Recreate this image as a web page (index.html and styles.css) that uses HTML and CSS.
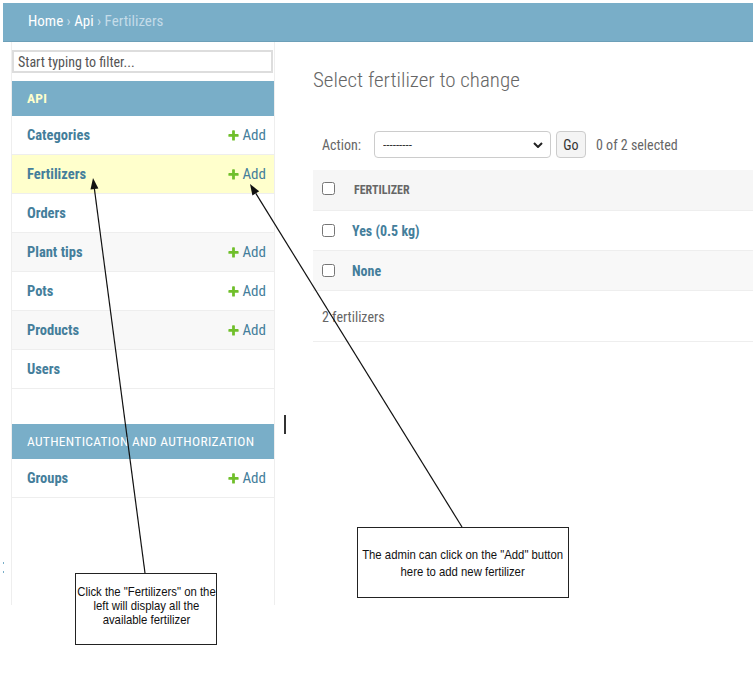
FILE: index.html
```html
<!DOCTYPE html>
<html lang="en">
<head>
<meta charset="utf-8">
<title>Select fertilizer to change</title>
<link rel="stylesheet" href="styles.css">
</head>
<body>
<div class="page">
  <div class="breadcrumbs"><a href="#">Home</a> › <a href="#">Api</a> › Fertilizers</div>
  <div class="main">
    <nav class="sidebar">
      <input class="filter" type="search" placeholder="Start typing to filter...">
      <div class="module current-app">
        <div class="caption">API</div>
        <div class="row"><a class="name" href="#">Categories</a><a class="add" href="#"><svg class="plus" viewBox="0 0 1792 1792"><path d="M1600 796v192q0 40-28 68t-68 28h-416v416q0 40-28 68t-68 28h-192q-40 0-68-28t-28-68v-416h-416q-40 0-68-28t-28-68v-192q0-40 28-68t68-28h416v-416q0-40 28-68t68-28h192q40 0 68 28t28 68v416h416q40 0 68 28t28 68z"/></svg>Add</a></div>
        <div class="row selected"><a class="name" href="#">Fertilizers</a><a class="add" href="#"><svg class="plus" viewBox="0 0 1792 1792"><path d="M1600 796v192q0 40-28 68t-68 28h-416v416q0 40-28 68t-68 28h-192q-40 0-68-28t-28-68v-416h-416q-40 0-68-28t-28-68v-192q0-40 28-68t68-28h416v-416q0-40 28-68t68-28h192q40 0 68 28t28 68v416h416q40 0 68 28t28 68z"/></svg>Add</a></div>
        <div class="row"><a class="name" href="#">Orders</a></div>
        <div class="row alt"><a class="name" href="#">Plant tips</a><a class="add" href="#"><svg class="plus" viewBox="0 0 1792 1792"><path d="M1600 796v192q0 40-28 68t-68 28h-416v416q0 40-28 68t-68 28h-192q-40 0-68-28t-28-68v-416h-416q-40 0-68-28t-28-68v-192q0-40 28-68t68-28h416v-416q0-40 28-68t68-28h192q40 0 68 28t28 68v416h416q40 0 68 28t28 68z"/></svg>Add</a></div>
        <div class="row"><a class="name" href="#">Pots</a><a class="add" href="#"><svg class="plus" viewBox="0 0 1792 1792"><path d="M1600 796v192q0 40-28 68t-68 28h-416v416q0 40-28 68t-68 28h-192q-40 0-68-28t-28-68v-416h-416q-40 0-68-28t-28-68v-192q0-40 28-68t68-28h416v-416q0-40 28-68t68-28h192q40 0 68 28t28 68v416h416q40 0 68 28t28 68z"/></svg>Add</a></div>
        <div class="row alt"><a class="name" href="#">Products</a><a class="add" href="#"><svg class="plus" viewBox="0 0 1792 1792"><path d="M1600 796v192q0 40-28 68t-68 28h-416v416q0 40-28 68t-68 28h-192q-40 0-68-28t-28-68v-416h-416q-40 0-68-28t-28-68v-192q0-40 28-68t68-28h416v-416q0-40 28-68t68-28h192q40 0 68 28t28 68v416h416q40 0 68 28t28 68z"/></svg>Add</a></div>
        <div class="row"><a class="name" href="#">Users</a></div>
      </div>
      <div class="module">
        <div class="caption">Authentication and Authorization</div>
        <div class="row"><a class="name" href="#">Groups</a><a class="add" href="#"><svg class="plus" viewBox="0 0 1792 1792"><path d="M1600 796v192q0 40-28 68t-68 28h-416v416q0 40-28 68t-68 28h-192q-40 0-68-28t-28-68v-416h-416q-40 0-68-28t-28-68v-192q0-40 28-68t68-28h416v-416q0-40 28-68t68-28h192q40 0 68 28t28 68v416h416q40 0 68 28t28 68z"/></svg>Add</a></div>
      </div>
    </nav>
    <div class="content">
      <h1>Select fertilizer to change</h1>
      <div class="actions">
        <label class="action-label">Action:</label>
        <div class="select">
          <select><option>---------</option></select>
          <svg class="chevron" viewBox="0 0 10 6"><path d="M1 1l4 4 4-4" fill="none" stroke="#222" stroke-width="2"/></svg>
        </div>
        <button class="go" type="button">Go</button>
        <span class="counter">0 of 2 selected</span>
      </div>
      <div class="results">
        <div class="thead"><input type="checkbox"><span class="col-label">Fertilizer</span></div>
        <div class="trow"><input type="checkbox"><a class="item" href="#">Yes (0.5 kg)</a></div>
        <div class="trow alt"><input type="checkbox"><a class="item" href="#">None</a></div>
      </div>
      <p class="paginator">2 fertilizers</p>
    </div>
  </div>
</div>

<div class="overlay">
  <svg class="arrows" width="756" height="685" viewBox="0 0 756 685">
    <line x1="145" y1="573" x2="94.4" y2="188.9" stroke="#111" stroke-width="1.2"/>
    <polygon points="93,178 98.4,188.4 90.5,189.4" fill="#111"/>
    <line x1="462" y1="527" x2="255.8" y2="193.4" stroke="#111" stroke-width="1.2"/>
    <polygon points="250,184 259.2,191.3 252.4,195.5" fill="#111"/>
  </svg>
  <div class="callout c1"><span class="note">Click the "Fertilizers" on the<br>left will display all the<br>available fertilizer</span></div>
  <div class="callout c2"><span class="note">The admin can click on the "Add" button<br>here to add new fertilizer</span></div>
  <span class="cursor"></span>
  <span class="dot d1"></span>
  <span class="dot d2"></span>
</div>
</body>
</html>
```
FILE: styles.css
```css
body {
  margin: 3px;
  font-family: Roboto, "Noto Sans", sans-serif;
  font-stretch: 85%;
  color: #333;
  background: #fff;
}
a { text-decoration: none; }

.breadcrumbs {
  background: #79aec8;
  color: #c4dce8;
  font-size: 15px;
  height: 36px;
  line-height: 36px;
  padding: 0 25px 2px;
  border-bottom: 1px solid #6c9fb8;
}
.breadcrumbs a { color: #fff; }

.main {
  display: flex;
  align-items: flex-start;
}

.sidebar {
  flex: none;
  margin-left: 8px;
  width: 262px;
  height: 563px;
  border-left: 1px solid #eee;
  border-right: 1px solid #eee;
}
.filter {
  display: block;
  box-sizing: border-box;
  width: 261px;
  height: 23px;
  margin: 8px 0;
  padding: 0 4px;
  border: 2px solid #ddd;
  border-radius: 0;
  font-family: inherit;
  font-stretch: 85%;
  font-size: 14px;
  color: #333;
  background: #fff;
  outline: none;
}
.filter::placeholder { color: #555; }

.caption {
  background: #79aec8;
  color: #fff;
  height: 35px;
  line-height: 35px;
  padding: 0 15px;
  font-size: 13.5px;
  letter-spacing: 0.3px;
  text-transform: uppercase;
}
.current-app .caption { color: #ffc; font-weight: bold; }
.module + .module { margin-top: 35px; }

.row {
  display: flex;
  justify-content: space-between;
  align-items: center;
  height: 38px;
  padding: 0 8px 0 15px;
  border-bottom: 1px solid #eee;
  font-size: 14.5px;
}
.row.alt { background: #f8f8f8; }
.row.selected { background: #ffc; }
.row .name { color: #447e9b; font-weight: bold; }
.add {
  display: flex;
  align-items: center;
  gap: 2px;
  color: #447e9b;
  font-size: 15px;
}
.plus { width: 13px; height: 13px; fill: #70bf2b; }

.content {
  flex: 1;
  padding-left: 38px;
}
h1 {
  margin: 24px 0 0;
  font-size: 21px;
  font-weight: 300;
  line-height: 28px;
  color: #666;
}
.actions {
  margin-top: 37px;
  display: flex;
  align-items: center;
  height: 27px;
  padding-left: 9px;
  font-size: 14px;
  color: #666;
}
.action-label { width: 52px; }
.select {
  position: relative;
  box-sizing: border-box;
  width: 177px;
  height: 27px;
  border: 1px solid #ccc;
  border-radius: 4px;
  background: #fff;
}
.select select {
  appearance: none;
  -webkit-appearance: none;
  width: 100%;
  height: 100%;
  border: none;
  background: transparent;
  padding: 0 8px;
  font-family: inherit;
  font-stretch: 85%;
  font-size: 13px;
  color: #333;
}
.chevron {
  position: absolute;
  right: 7px;
  top: 10px;
  width: 10px;
  height: 6px;
}
.go {
  margin-left: 5px;
  width: 30px;
  height: 27px;
  padding: 0;
  border: 1px solid #ccc;
  border-radius: 4px;
  background: #f4f4f4;
  font-family: inherit;
  font-stretch: 85%;
  font-size: 14px;
  color: #333;
}
.counter { margin-left: 10px; }

.results { margin-top: 12px; }
.thead, .trow {
  display: flex;
  align-items: center;
  padding-left: 9px;
  border-bottom: 1px solid #eee;
}
.thead { height: 40px; background: #f6f6f6; }
.trow { height: 39px; }
.trow.alt { background: #f8f8f8; }
.thead input, .trow input { margin: 0; width: 13px; height: 13px; }
.thead input { margin-top: -3px; }
.col-label {
  margin-left: 19px;
  font-size: 12px;
  font-weight: bold;
  text-transform: uppercase;
  color: #666;
}
.item {
  margin-left: 17px;
  font-size: 14px;
  font-weight: bold;
  color: #447e9b;
}
.paginator {
  margin: 0;
  height: 50px;
  line-height: 52px;
  padding-left: 9px;
  border-bottom: 1px solid #eee;
  font-size: 14px;
  color: #666;
}

.overlay {
  position: absolute;
  left: 0;
  top: 0;
  width: 756px;
  height: 685px;
  pointer-events: none;
}
.arrows { position: absolute; left: 0; top: 0; }
.callout {
  position: absolute;
  box-sizing: border-box;
  display: flex;
  justify-content: center;
  border: 1px solid #222;
  background: #fff;
  font-family: "Liberation Sans", Arial, sans-serif;
  font-stretch: normal;
  font-size: 13.5px;
  line-height: 14px;
  text-align: center;
  color: #111;
  white-space: nowrap;
}
.note {
  display: block;
  transform: scaleX(0.84);
}
.c1 { left: 75px; top: 573px; width: 142px; height: 72px; padding-top: 11px; }
.c2 {
  left: 357px; top: 527px; width: 212px; height: 71px;
  align-items: center;
  line-height: 17px;
}
.cursor {
  position: absolute;
  left: 284px; top: 415px;
  width: 2px; height: 19px;
  background: #333;
}
.dot {
  position: absolute;
  left: 3px;
  width: 1px; height: 2px;
  background: #79aec8;
}
.d1 { top: 562px; }
.d2 { top: 571px; }
```
